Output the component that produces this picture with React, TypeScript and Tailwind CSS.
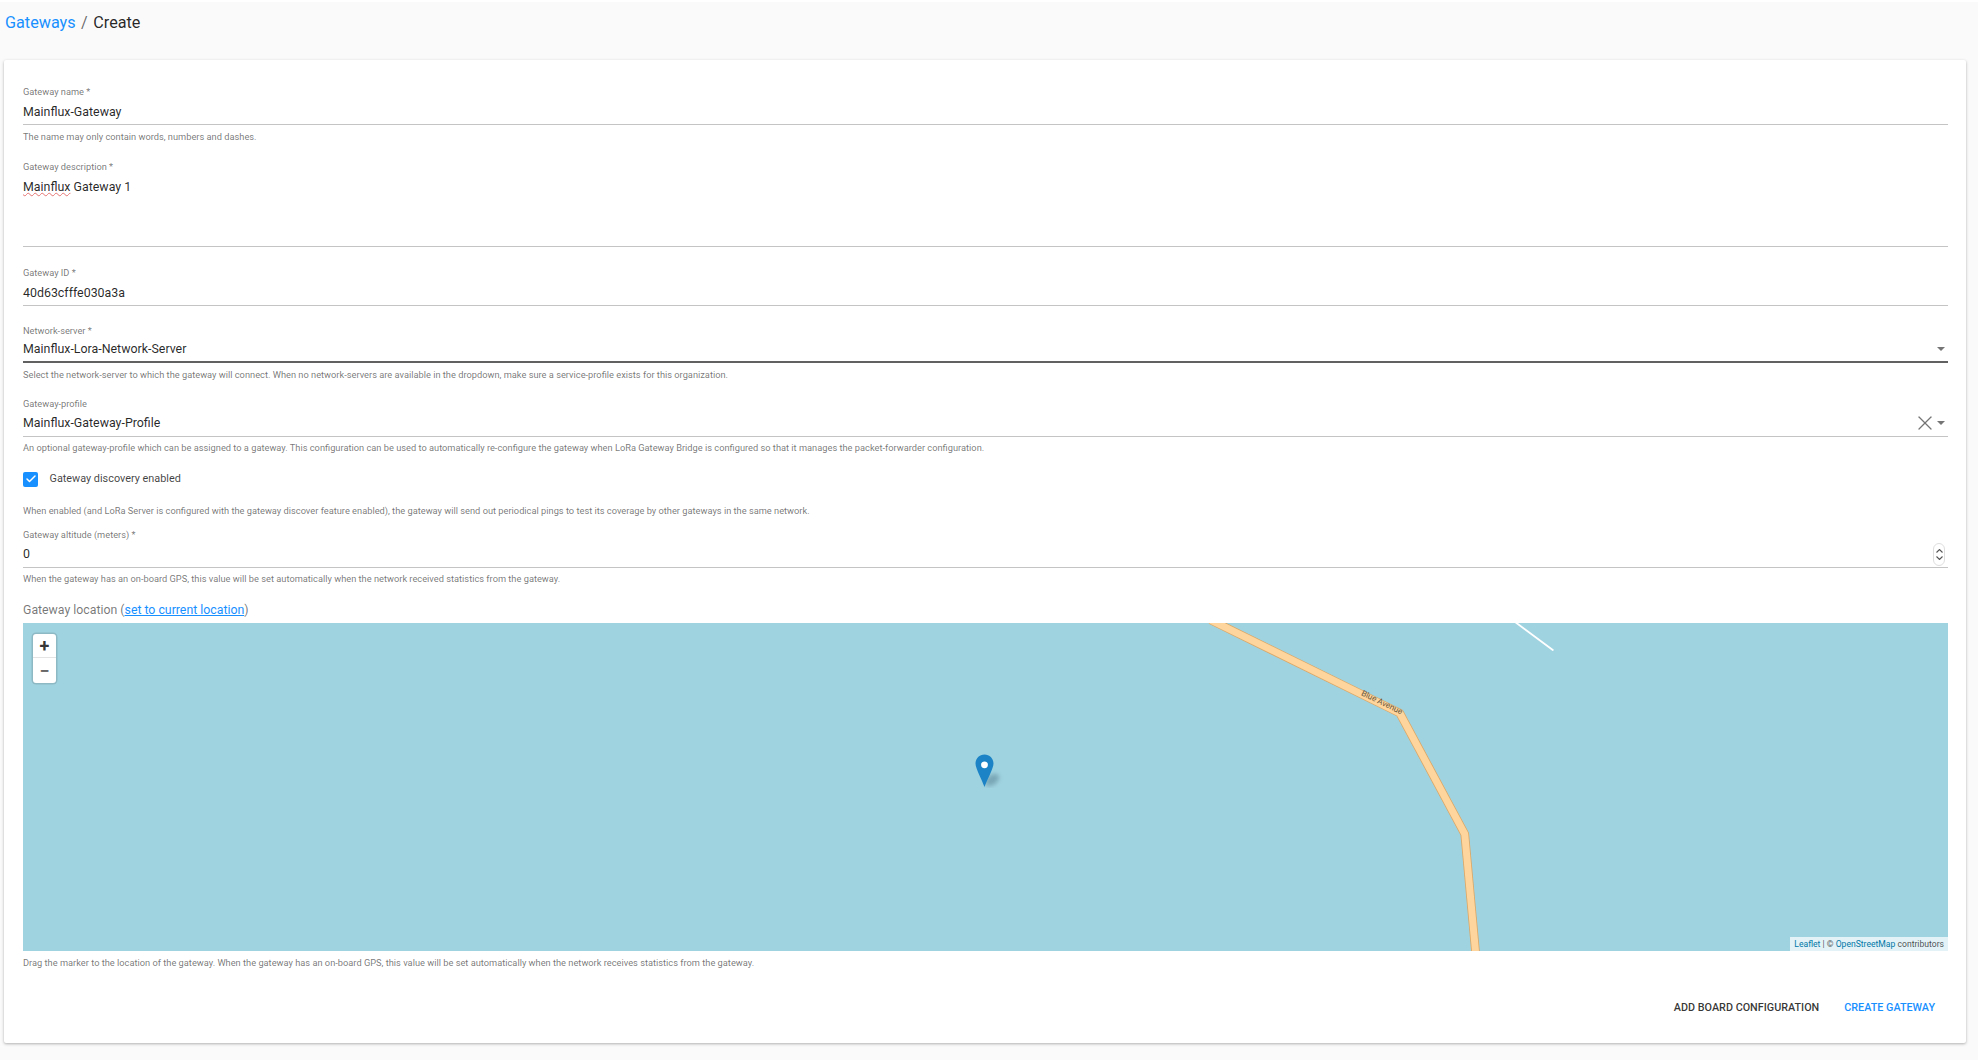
import { Check, X } from "lucide-react";

const font = { fontFamily: "Roboto, sans-serif" };

function Label({ children }: { children: React.ReactNode }) {
  return <div className="h-[12px] text-[9.25px] leading-[12px] text-black/55">{children}</div>;
}

function Helper({ className, children }: { className: string; children: React.ReactNode }) {
  return <p className={`h-[12px] text-[9.27px] leading-[12px] whitespace-nowrap text-black/55 ${className}`}>{children}</p>;
}

function Caret() {
  return (
    <svg width="8" height="4" viewBox="0 0 8 4" className="mr-[3px] ml-[4px]">
      <path d="M0 0h8L4 4z" fill="#757575" />
    </svg>
  );
}

export default function App() {
  return (
    <div style={font} className="min-h-screen border-t-2 border-white bg-[#fafafa] pr-[12px] pl-[4px]">
      <header className="flex h-[58px] items-start pt-[12px] pl-[1px] text-[16.2px] leading-[18px]">
        <a className="text-[#1890ff]">Gateways</a>
        <span className="mx-[5.5px] text-black/60">/</span>
        <span className="text-black/85">Create</span>
      </header>

      <main className="rounded-[2px] bg-white pt-[26px] pr-[18px] pb-[25px] pl-[19px] shadow-[0_1px_3px_rgba(0,0,0,0.3)]">
        <Label>Gateway name *</Label>
        <div className="flex h-[27px] items-center border-b border-[#c4c4c4] pt-[2px] text-[12.4px] text-black/85">Mainflux-Gateway</div>
        <Helper className="mt-[6px]">The name may only contain words, numbers and dashes.</Helper>

        <div className="mt-[18px]">
          <Label>Gateway description *</Label>
          <div className="h-[74px] border-b border-[#c4c4c4] pt-[4px] text-[12.4px] leading-[20px] text-black/85">
            <span className="underline decoration-[#e57373] decoration-wavy decoration-1">Mainflux</span> Gateway 1
          </div>
        </div>

        <div className="mt-[20px]">
          <Label>Gateway ID *</Label>
          <div className="flex h-[27px] items-center border-b border-[#c4c4c4] pt-[2px] text-[12.4px] text-black/85">40d63cfffe030a3a</div>
        </div>

        <div className="mt-[19px]">
          <Label>Network-server *</Label>
          <div className="flex h-[26px] items-center justify-between border-b-2 border-[#616161] text-[12.4px] text-black/85">
            <span>Mainflux-Lora-Network-Server</span>
            <Caret />
          </div>
          <Helper className="mt-[6px]">
            Select the network-server to which the gateway will connect. When no network-servers are available in the dropdown, make sure a service-profile exists for this organization.
          </Helper>
        </div>

        <div className="mt-[17px]">
          <Label>Gateway-profile</Label>
          <div className="flex h-[27px] items-center border-b border-[#c4c4c4] text-[12.4px] text-black/85">
            <span className="flex-1">Mainflux-Gateway-Profile</span>
            <X size={24} strokeWidth={1.3} className="-mr-[4px] text-[#757575]" />
            <Caret />
          </div>
          <Helper className="mt-[5px]">
            An optional gateway-profile which can be assigned to a gateway. This configuration can be used to automatically re-configure the gateway when LoRa Gateway Bridge is configured so that it manages the packet-forwarder configuration.
          </Helper>
        </div>

        <label className="mt-[17px] flex h-[16px] items-center gap-[11.5px] text-[10.85px] text-black/75">
          <span className="flex h-[15px] w-[15px] items-center justify-center rounded-[2px] bg-[#1890ff]">
            <Check size={12} strokeWidth={3} className="text-white" />
          </span>
          Gateway discovery enabled
        </label>
        <Helper className="mt-[18px]">
          When enabled (and LoRa Server is configured with the gateway discover feature enabled), the gateway will send out periodical pings to test its coverage by other gateways in the same network.
        </Helper>

        <div className="mt-[12px]">
          <Label>Gateway altitude (meters) *</Label>
          <div className="flex h-[27px] items-center justify-between border-b border-[#c4c4c4] text-[12.4px] text-black/85">
            <span>0</span>
            <span className="mr-[3px] flex h-[23px] w-[12px] flex-col items-center justify-center gap-[3px] rounded-full border border-[#dedede]">
              <svg width="7" height="4" viewBox="0 0 7 4"><path d="M.5 3.5l3-3 3 3" fill="none" stroke="#555" strokeWidth="1.1" /></svg>
              <svg width="7" height="4" viewBox="0 0 7 4"><path d="M.5.5l3 3 3-3" fill="none" stroke="#555" strokeWidth="1.1" /></svg>
            </span>
          </div>
          <Helper className="mt-[5px]">When the gateway has an on-board GPS, this value will be set automatically when the network received statistics from the gateway.</Helper>
        </div>

        <div className="mt-[17px] h-[16px] text-[12.3px] leading-[16px] text-black/55">
          Gateway location (<a className="text-[#1890ff] underline">set to current location</a>)
        </div>

        <div className="relative mt-[5px] h-[328px] overflow-hidden bg-[#a0d3e0]">
          <svg className="absolute inset-0 h-full w-full" viewBox="0 0 1924 328" preserveAspectRatio="none">
            <path d="M1187 -3L1376 90L1441 211L1452 331" fill="none" stroke="#dba766" strokeWidth="8.6" strokeLinejoin="round" />
            <path d="M1187 -3L1376 90L1441 211L1452 331" fill="none" stroke="#fed59c" strokeWidth="7" strokeLinejoin="round" />
            <path d="M1490 -2L1529 27" fill="none" stroke="#ffffff" strokeWidth="1.8" strokeLinecap="round" />
            <text x="1337" y="72" fontSize="8.2" fill="#6b5a40" transform="rotate(26 1337 72)">Blue Avenue</text>
          </svg>

          <div className="absolute top-[11px] left-[10px] w-[23px] rounded-[3px] bg-white shadow-[0_0_0_1.5px_rgba(0,0,0,0.12)]">
            <div className="flex h-[24px] items-center justify-center border-b border-[#e4e4e4] pt-[1px] text-[18px] leading-none font-bold text-black/80">+</div>
            <div className="flex h-[25px] items-center justify-center pt-[1px] text-[18px] leading-none font-bold text-black/60">−</div>
          </div>

          <svg className="absolute top-[131px] left-[952px]" width="30" height="34" viewBox="0 0 30 34">
            <ellipse cx="17" cy="26" rx="8" ry="5" fill="#33556a" opacity="0.35" transform="rotate(-35 17 26)" className="blur-[2px]" />
            <path d="M9.5 0.5C4.5 0.5 0.5 4.4 0.5 9.5C0.5 14.5 7 26 9.5 33C12 26 18.5 14.5 18.5 9.5C18.5 4.4 14.5 0.5 9.5 0.5Z" fill="#1c84c6" />
            <circle cx="9.5" cy="10.8" r="3.4" fill="#ffffff" />
          </svg>

          <div className="absolute right-0 bottom-0 h-[14px] bg-white/70 px-[4px] text-[8.6px] leading-[14px] text-black/70">
            <a className="text-[#0078a8]">Leaflet</a> | © <a className="text-[#0078a8]">OpenStreetMap</a> contributors
          </div>
        </div>

        <Helper className="mt-[6px]">Drag the marker to the location of the gateway. When the gateway has an on-board GPS, this value will be set automatically when the network receives statistics from the gateway.</Helper>

        <div className="mt-[29px] flex h-[20px] items-center justify-end gap-[25px] pr-[13px] text-[10.8px] font-medium uppercase">
          <button className="text-black/80 uppercase">Add board configuration</button>
          <button className="text-[#1890ff] uppercase">Create gateway</button>
        </div>
      </main>
    </div>
  );
}
